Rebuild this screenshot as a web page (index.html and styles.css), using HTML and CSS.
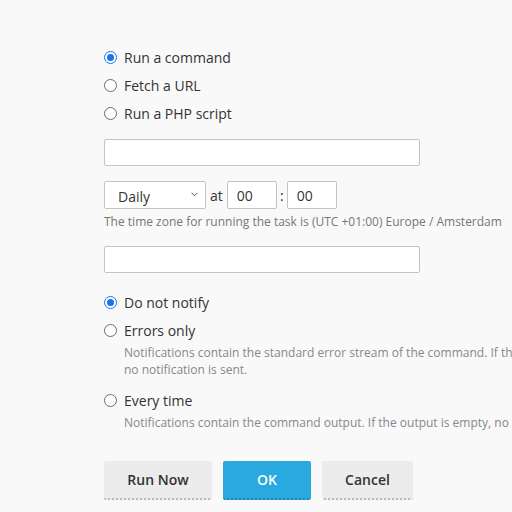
FILE: index.html
```html
<!DOCTYPE html>
<html>
<head>
<meta charset="utf-8">
<link rel="stylesheet" href="styles.css">
</head>
<body>
<div class="form">
  <div class="group top">
    <label class="radio"><span class="dot on"></span><span>Run a command</span></label>
    <label class="radio"><span class="dot"></span><span>Fetch a URL</span></label>
    <label class="radio"><span class="dot"></span><span>Run a PHP script</span></label>
  </div>
  <div class="field"><div class="input wide"></div></div>
  <div class="field sched">
    <div class="time-row">
      <div class="select"><span>Daily</span>
        <svg class="chev" width="7" height="5" viewBox="0 0 7 5"><path d="M0.5 0.8 L3.5 3.8 L6.5 0.8" fill="none" stroke="#555" stroke-width="1"/></svg>
      </div>
      <span class="at">at</span>
      <div class="input small"><span>00</span></div>
      <span class="colon">:</span>
      <div class="input small"><span>00</span></div>
    </div>
    <div class="hint">The time zone for running the task is (UTC +01:00) Europe / Amsterdam</div>
  </div>
  <div class="field second"><div class="input wide"></div></div>
  <div class="group notify">
    <label class="radio"><span class="dot on"></span><span>Do not notify</span></label>
    <label class="radio"><span class="dot"></span><span>Errors only</span></label>
    <div class="desc">Notifications contain the standard error stream of the command. If the stream is empty,<br>no notification is sent.</div>
    <label class="radio"><span class="dot"></span><span>Every time</span></label>
    <div class="desc">Notifications contain the command output. If the output is empty, no notification is sent.</div>
  </div>
  <div class="buttons">
    <button class="btn run">Run Now</button>
    <button class="btn ok">OK</button>
    <button class="btn cancel">Cancel</button>
  </div>
</div>
</body>
</html>
```
FILE: styles.css
```css
html, body {
  margin: 0;
  padding: 0;
  background: #f9f9f9;
  overflow: hidden;
  width: 512px;
  height: 512px;
}
body {
  font-family: "Open Sans", "DejaVu Sans", sans-serif;
  color: #333;
  font-size: 14px;
}
.form {
  padding: 43px 0 0 104px;
  width: 700px;
}
.group {
  display: flex;
  flex-direction: column;
}
.radio {
  display: flex;
  align-items: center;
  height: 28px;
  gap: 7px;
  font-size: 14px;
}
.dot {
  width: 11px;
  height: 11px;
  border: 1px solid #6b6b6b;
  border-radius: 50%;
  background: #fff;
  flex: none;
  position: relative;
}
.dot.on {
  border-color: #1a73e8;
  background: #fff;
}
.dot.on::after {
  content: "";
  position: absolute;
  left: 2px;
  top: 2px;
  width: 7px;
  height: 7px;
  border-radius: 50%;
  background: #1a73e8;
}
.field {
  margin-top: 12px;
}
.field.second {
  margin-top: 16px;
}
.input {
  background: #fff;
  border: 1px solid #c4c4c4;
  border-radius: 2px;
  box-sizing: border-box;
  display: flex;
  align-items: center;
}
.input.wide {
  width: 316px;
  height: 27px;
}
.sched {
  margin-top: 15px;
}
.time-row {
  display: flex;
  align-items: center;
  height: 28px;
}
.select {
  width: 102px;
  height: 28px;
  box-sizing: border-box;
  background: #fff;
  border: 1px solid #c4c4c4;
  border-radius: 2px;
  display: flex;
  align-items: center;
  justify-content: space-between;
  padding: 3px 7px 0 13px;
  font-size: 14px;
}
.chev {
  margin-top: -5px;
}
.at {
  margin: 0 4px;
}
.input.small {
  width: 50px;
  height: 28px;
  padding-left: 9px;
}
.colon {
  width: 10px;
  text-align: center;
}
.hint {
  margin-top: 4px;
  font-size: 12px;
  line-height: 17px;
  color: #777;
  white-space: nowrap;
}
.notify {
  margin-top: 15px;
}
.desc {
  margin-left: 20px;
  font-size: 12px;
  line-height: 17px;
  color: #888;
  margin-bottom: 8px;
  white-space: nowrap;
}
.buttons {
  display: flex;
  gap: 11px;
  margin-top: 22px;
}
.btn {
  font-family: "Open Sans", "DejaVu Sans", sans-serif;
  font-size: 14px;
  font-weight: 600;
  height: 39px;
  border: none;
  border-radius: 2px;
  border-bottom: 2px dotted #b8b8b8;
  background: #ececec;
  color: #333;
  padding: 0;
}
.run { width: 108px; }
.ok { width: 88px; background: #28a9e0; color: #fff; border-bottom-color: #1d86b8; }
.cancel { width: 91px; }
```
